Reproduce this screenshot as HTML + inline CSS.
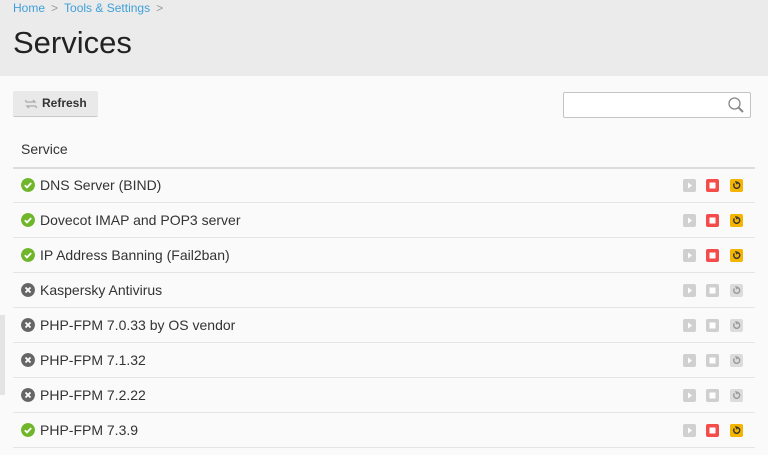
<!DOCTYPE html>
<html><head><style>
*{margin:0;padding:0;box-sizing:border-box}
body{width:768px;height:455px;overflow:hidden;background:#fafafa;font-family:"Liberation Sans",sans-serif;color:#333;position:relative}
.hdr{position:absolute;left:0;top:0;width:768px;height:76px;background:#ebebeb}
.bc{position:absolute;left:13px;top:1px;font-size:12px;color:#3fa0d8}
.bc span{color:#999;margin:0 6px}
h1{position:absolute;left:13px;top:25px;font-size:31px;font-weight:normal;color:#222}
.btn{position:absolute;left:13px;top:91px;width:85px;height:26px;background:#e9e9e9;border-bottom:1px solid #c8c8c8;border-radius:2px;font-size:12px;font-weight:bold;color:#333}
.btn svg{position:absolute;left:10px;top:5px}
.btn b{position:absolute;left:29px;top:5px}
.srch{position:absolute;left:563px;top:92px;width:188px;height:26px;background:#fff;border:1px solid #c4c4c4;border-radius:2px}
.srch svg{position:absolute;right:5px;top:3px}
.th{position:absolute;left:21px;top:141px;font-size:14px;color:#333}
.line{position:absolute;left:13px;width:742px;height:1px;background:#e4e4e4}
.row{position:absolute;left:13px;width:742px;height:35px}
.row .ic{position:absolute;left:8px;top:10px;width:14px;height:14px;border-radius:50%}
.row .t{position:absolute;left:27px;top:9px;font-size:14px;color:#333}
.b{position:absolute;top:11px;width:13px;height:13px;border-radius:2px}
.strip{position:absolute;left:0;top:315px;width:5px;height:80px;background:#e4e4e4}
</style></head><body>
<div class="hdr"></div>
<div class="bc">Home<span>&gt;</span>Tools &amp; Settings<span>&gt;</span></div>
<h1>Services</h1>
<div class="btn"><svg width="16" height="16" viewBox="0 0 16 16" fill="none" stroke="#aaa" stroke-width="1.3"><path d="M3 6h9l-2-2M13 10H4l2 2M3 6a2 2 0 0 1 0-2M13 10a2 2 0 0 1 0 2"/></svg><b>Refresh</b></div>
<div class="srch"><svg width="18" height="18" viewBox="0 0 18 18" fill="none" stroke="#888" stroke-width="1.3"><circle cx="7.5" cy="7.5" r="5.5"/><path d="M11.5 11.5l4.5 4.5" stroke-width="2"/></svg></div>
<div class="th">Service</div>
<div class="line" style="top:167px;background:#ddd;height:2px"></div>
<div class="strip"></div>
<div id="rows"></div>
<script>
var d=[["DNS Server (BIND)",1],["Dovecot IMAP and POP3 server",1],["IP Address Banning (Fail2ban)",1],["Kaspersky Antivirus",0],["PHP-FPM 7.0.33 by OS vendor",0],["PHP-FPM 7.1.32",0],["PHP-FPM 7.2.22",0],["PHP-FPM 7.3.9",1]];
var h="";
d.forEach(function(r,i){var y=168+i*35;
var ic=r[1]?'<svg class="ic" viewBox="0 0 14 14"><circle cx="7" cy="7" r="7" fill="#6fb62b"/><path d="M3.8 7.2l2.2 2.2 4.2-4.4" stroke="#fff" stroke-width="1.8" fill="none"/></svg>':'<svg class="ic" viewBox="0 0 14 14"><circle cx="7" cy="7" r="7" fill="#666"/><path d="M4.5 4.5l5 5M9.5 4.5l-5 5" stroke="#fff" stroke-width="1.8"/></svg>';
var sc=r[1]?"#f44b4b":"#cfcfcf",rc=r[1]?"#f5b400":"#dcdcdc",rs=r[1]?"#333":"#999";
h+='<div class="row" style="top:'+y+'px">'+ic+'<div class="t">'+r[0]+'</div>'+
'<div class="b" style="left:670px;background:#d0d0d0"><svg width="13" height="13"><path d="M5 3.5l4 3-4 3z" fill="#fff"/></svg></div>'+
'<div class="b" style="left:693px;background:'+sc+'"><svg width="13" height="13"><rect x="3.5" y="3.5" width="6" height="6" fill="#fff"/></svg></div>'+
'<div class="b" style="left:717px;background:'+rc+'"><svg width="13" height="13" fill="none" stroke="'+rs+'" stroke-width="1.4"><path d="M4.4 4.4A3 3 0 1 0 7.5 3.4"/><path d="M5.2 2.6l2.2.8-1 1.8"/></svg></div>'+
'</div><div class="line" style="top:'+(y+34)+'px"></div>';});
document.getElementById("rows").innerHTML=h;
</script>
</body></html>
